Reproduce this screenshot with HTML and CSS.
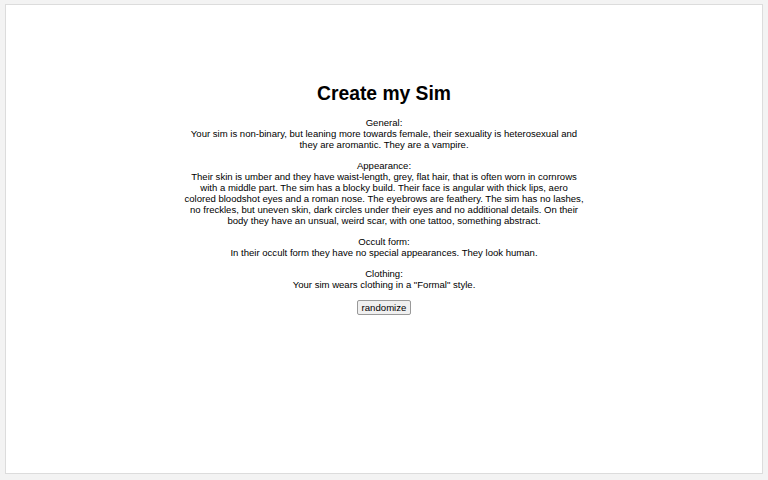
FILE: index.html
```html
<!DOCTYPE html>
<html lang="en">
<head>
    <meta charset="UTF-8">
    <title>Create my Sim</title>
    <link rel="stylesheet" href="styles.css">
</head>
<body>
    <div class="page">
        <div class="generator">
            <h1>Create my Sim</h1>
            <p>General:<br>Your sim is non-binary, but leaning more towards female, their sexuality is heterosexual and they are aromantic. They are a vampire.</p>
            <p>Appearance:<br>Their skin is umber and they have waist-length, grey, flat hair, that is often worn in cornrows with a middle part. The sim has a blocky build. Their face is angular with thick lips, aero colored bloodshot eyes and a roman nose. The eyebrows are feathery. The sim has no lashes, no freckles, but uneven skin, dark circles under their eyes and no additional details. On their body they have an unsual, weird scar, with one tattoo, something abstract.</p>
            <p>Occult form:<br>In their occult form they have no special appearances. They look human.</p>
            <p>Clothing:<br>Your sim wears clothing in a "Formal" style.</p>
            <button class="randomize">randomize</button>
        </div>
    </div>
</body>
</html>
```

FILE: styles.css
```css
body {
    margin: 0;
    padding: 4px 5px 4px 5px;
    background-color: #f3f3f3;
    font-family: 'Liberation Sans', Arial, sans-serif;
    color: #000;
}
.page {
    background-color: #fff;
    border: 1px solid #dcdcdc;
    height: 470px;
    box-sizing: border-box;
}
.generator {
    width: 401px;
    margin: 0 auto;
    padding-top: 78px;
    text-align: center;
    font-size: 9.55px;
}
h1 {
    font-size: 19.3px;
    margin: 0 0 12px 0;
}
p {
    margin: 0 0 10px 0;
    line-height: 11px;
}
.randomize {
    font-family: 'Liberation Sans', Arial, sans-serif;
    font-size: 9.6px;
    padding: 1px 4px;
    background-color: #f0f0f0;
    border: 1px solid #999;
    border-radius: 2px;
    color: #000;
}
```
